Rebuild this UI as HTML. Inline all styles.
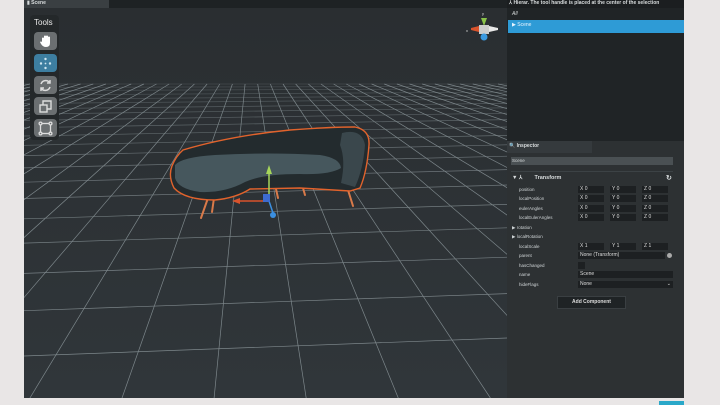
<!DOCTYPE html>
<html><head><meta charset="utf-8"><style>
*{margin:0;padding:0;box-sizing:border-box}
body{width:720px;height:405px;background:#e9e6e6;position:relative;overflow:hidden;font-family:"Liberation Sans",sans-serif}
.a{position:absolute}
.t{font-size:5px;color:#d8dcdd;white-space:nowrap}
.f{position:absolute;height:7px;background:#1d2022;font-size:5px;color:#ddd;padding-left:2px;line-height:7px}
.l{position:absolute;left:519px;font-size:4.5px;color:#cfd4d6;line-height:7px}
.tb{position:absolute;left:34px;width:23px;height:18px;background:#6b6f71;border-radius:4px}
</style></head><body>
<div class="a" style="left:24px;top:0;width:660px;height:398px;background:#2f3437"></div>
<svg class="a" style="left:24px;top:8px" width="483" height="390" viewBox="24 8 483 390">
<defs><linearGradient id="g" x1="0" y1="0" x2="0" y2="1"><stop offset="0" stop-color="#2a2e31"/><stop offset="1" stop-color="#30363a"/></linearGradient></defs>
<rect x="24" y="8" width="483" height="390" fill="url(#g)"/>
<g id="grid" stroke="#7d878b" stroke-width="0.7" fill="none"></g>
<!-- sofa legs -->
<g stroke="#d97a4a" stroke-width="2" stroke-linecap="round">
<line x1="208" y1="198" x2="201" y2="218"/><line x1="214" y1="198" x2="212" y2="212"/>
<line x1="276" y1="189" x2="278" y2="198"/><line x1="303" y1="188" x2="305" y2="195"/>
<line x1="348" y1="190" x2="353" y2="206"/></g>
<!-- sofa body -->
<path d="M183 150 Q230 136 290 130 Q330 127 355 127 Q370 130 369 145 Q367 172 360 188 L350 191 L300 188 L250 189 Q236 198 215 200 Q185 200 174 188 Q168 176 172 166 Q176 156 183 150Z" fill="#232b2e" stroke="#e2632c" stroke-width="1.4"/>
<path d="M175 165 Q182 157 215 155 Q270 152 320 155 Q340 158 341 168 Q330 175 300 174 Q262 174 245 182 Q225 193 200 192 Q178 189 175 178Z" fill="#46575d"/>
<path d="M342 133 Q362 128 365 145 Q363 170 355 187 L341 183 Q346 160 340 145Z" fill="#3a474c"/>
<!-- gizmo -->
<line x1="269" y1="200" x2="269" y2="172" stroke="#a6d65a" stroke-width="1.5"/>
<path d="M266 174 L269 165 L272 174Z" fill="#a6d65a"/>
<line x1="266" y1="201" x2="238" y2="201" stroke="#d9532c" stroke-width="1.5"/>
<path d="M240 198 L232 201 L240 204Z" fill="#d9532c"/>
<line x1="269" y1="201" x2="273" y2="213" stroke="#3b8fe0" stroke-width="1.5"/>
<circle cx="273" cy="215" r="3" fill="#3b8fe0"/>
<rect x="263" y="194" width="7" height="8" fill="#3d6bd0"/>
<!-- axis gizmo -->
<path d="M481 18 L484 26 L487 18Z" fill="#8bc34a"/>
<path d="M471 28 L479 26 L479 32 L471 30Z" fill="#d9532c"/>
<rect x="479" y="25" width="10" height="9" fill="#ccc"/>
<path d="M489 26 L498 28 L498 30 L489 32Z" fill="#e8e8e8"/>
<circle cx="484" cy="37" r="3.5" fill="#3b9ae0"/>
<text x="482" y="15" font-size="4" fill="#ddd">y</text>
<text x="466" y="32" font-size="4" fill="#ddd">x</text>
</svg>
<script>
var g=document.getElementById('grid'),s='';
for(var n=-30;n<=30;n++){var k=(n-0.39)*0.253;var y1=84,y2=398;s+='<line x1="'+(250+k*(y1-34))+'" y1="'+y1+'" x2="'+(250+k*(y2-34))+'" y2="'+y2+'"/>';}
[84,87,90,94,98,102,107,112,118,125,133,142,152,164,178,194,214,238,268,305,350].forEach(function(y,i){s+='<line x1="24" y1="'+(y+i*0.3)+'" x2="507" y2="'+(y-i*0.6)+'" stroke-opacity="'+(0.3+i*0.035)+'"/>';});
g.innerHTML=s;
</script>
<!-- top bar -->
<div class="a" style="left:24px;top:0;width:85px;height:8px;background:#3a3f42"></div>
<div class="a" style="left:109px;top:0;width:398px;height:8px;background:#1e2224"></div>
<div class="a t" style="left:27px;top:0;font-size:5px;line-height:7px;font-weight:bold">▮ Scene</div>
<!-- tools -->
<div class="a" style="left:30px;top:15px;width:29px;height:125px;background:#24282a;border-radius:4px"></div>
<div class="a" style="left:34px;top:18px;font-size:8px;color:#e8e8e8">Tools</div>
<div class="tb" style="top:32px"></div>
<svg class="a" style="left:38px;top:33px" width="16" height="16" viewBox="0 0 16 16"><path d="M4 9 V5 Q5 4 6 5 V3 Q7 2 8 3 V3 Q9 2 10 3 V4 Q11 3 12 4 V10 Q12 14 8 14 Q5 14 3 11 L2 9 Q3 8 4 9Z" fill="#fff"/></svg>
<div class="tb" style="top:54px;background:#3d7ea0"></div>
<svg class="a" style="left:39px;top:57px" width="13" height="13" viewBox="0 0 13 13" fill="#cfe6f0"><circle cx="6.5" cy="2" r="1.2"/><circle cx="6.5" cy="11" r="1.2"/><circle cx="2" cy="6.5" r="1.2"/><circle cx="11" cy="6.5" r="1.2"/><circle cx="6.5" cy="6.5" r="0.9"/></svg>
<div class="tb" style="top:76px"></div>
<svg class="a" style="left:38px;top:78px" width="15" height="15" viewBox="0 0 15 15" fill="none" stroke="#ddd" stroke-width="1.5"><path d="M3 6 A5 5 0 0 1 12 5"/><path d="M12 9 A5 5 0 0 1 3 10"/><path d="M12 2 V5 H9"/><path d="M3 13 V10 H6"/></svg>
<div class="tb" style="top:97px"></div>
<svg class="a" style="left:38px;top:99px" width="15" height="15" viewBox="0 0 15 15" fill="none" stroke="#ddd" stroke-width="1.4"><rect x="2" y="6" width="7" height="7"/><path d="M5 6 V2 H13 V10 H9"/></svg>
<div class="tb" style="top:119px"></div>
<svg class="a" style="left:38px;top:121px" width="15" height="15" viewBox="0 0 15 15" fill="none" stroke="#ddd" stroke-width="1.3"><rect x="2.5" y="2.5" width="10" height="10"/><circle cx="2.5" cy="2.5" r="1.4" fill="#6b6f71"/><circle cx="12.5" cy="2.5" r="1.4" fill="#6b6f71"/><circle cx="2.5" cy="12.5" r="1.4" fill="#6b6f71"/><circle cx="12.5" cy="12.5" r="1.4" fill="#6b6f71"/></svg>
<!-- right panel -->
<div class="a" style="left:507px;top:0;width:177px;height:398px;background:#2d3133"></div>
<div class="a" style="left:507px;top:0;width:177px;height:8px;background:#1b1e20"></div>
<div class="a t" style="left:509px;top:0;line-height:7px;font-weight:bold;font-size:5px">⅄ Hierar. The tool handle is placed at the center of the selection</div>
<div class="a" style="left:507px;top:8px;width:177px;height:133px;background:#202426"></div>
<div class="a t" style="left:512px;top:11px;font-style:italic">All</div>
<div class="a" style="left:508px;top:20px;width:176px;height:13px;background:#2e9bd6"></div>
<div class="a t" style="left:512px;top:22px;font-size:5px;color:#e8f4ff">▶ Scene</div>
<div class="a" style="left:507px;top:141px;width:85px;height:12px;background:#353a3d"></div>
<div class="a t" style="left:509px;top:143px;font-weight:bold">🔍 Inspector</div>
<div class="a" style="left:511px;top:157px;width:162px;height:8px;background:#4a5053"></div>
<div class="a t" style="left:512px;top:158px;font-size:4.5px">Scene</div>
<div class="a" style="left:511px;top:171px;width:162px;height:1px;background:#3c4245"></div>
<div class="a t" style="left:512px;top:175px;font-weight:bold;font-size:5.5px">▼ ⅄&nbsp;&nbsp;&nbsp;&nbsp;&nbsp;&nbsp;&nbsp;&nbsp;Transform</div>
<div class="a t" style="left:666px;top:174px;font-size:7px;font-weight:bold">↻</div>
<div class="l" style="top:186px">position</div><div class="l" style="top:195px">localPosition</div><div class="l" style="top:205px">eulerAngles</div><div class="l" style="top:214px">localEulerAngles</div>
<div class="l" style="top:224px;left:512px">▶ rotation</div><div class="l" style="top:233px;left:512px">▶ localRotation</div>
<div class="l" style="top:243px">localScale</div><div class="l" style="top:252px">parent</div><div class="l" style="top:262px">hasChanged</div><div class="l" style="top:271px">name</div><div class="l" style="top:281px">hideFlags</div>
<div class="f" style="left:578px;top:186px;width:26px">X 0</div><div class="f" style="left:610px;top:186px;width:26px">Y 0</div><div class="f" style="left:642px;top:186px;width:26px">Z 0</div>
<div class="f" style="left:578px;top:195px;width:26px">X 0</div><div class="f" style="left:610px;top:195px;width:26px">Y 0</div><div class="f" style="left:642px;top:195px;width:26px">Z 0</div>
<div class="f" style="left:578px;top:205px;width:26px">X 0</div><div class="f" style="left:610px;top:205px;width:26px">Y 0</div><div class="f" style="left:642px;top:205px;width:26px">Z 0</div>
<div class="f" style="left:578px;top:214px;width:26px">X 0</div><div class="f" style="left:610px;top:214px;width:26px">Y 0</div><div class="f" style="left:642px;top:214px;width:26px">Z 0</div>
<div class="f" style="left:578px;top:243px;width:26px">X 1</div><div class="f" style="left:610px;top:243px;width:26px">Y 1</div><div class="f" style="left:642px;top:243px;width:26px">Z 1</div>
<div class="f" style="left:578px;top:252px;width:87px">None (Transform)</div><div class="a" style="left:667px;top:253px;width:5px;height:5px;border-radius:50%;background:#aaa"></div>
<div class="f" style="left:578px;top:262px;width:7px;padding:0"></div>
<div class="f" style="left:578px;top:271px;width:95px">Scene</div>
<div class="f" style="left:578px;top:281px;width:95px">None<span style="position:absolute;right:2px">⌄</span></div>
<div class="a" style="left:557px;top:296px;width:69px;height:13px;background:#1f2325;border:1px solid #3a3f42;font-size:5px;color:#ddd;text-align:center;line-height:11px;font-weight:bold">Add Component</div>
<div class="a" style="left:659px;top:401px;width:25px;height:4px;background:#2aa8c9"></div>
</body></html>
